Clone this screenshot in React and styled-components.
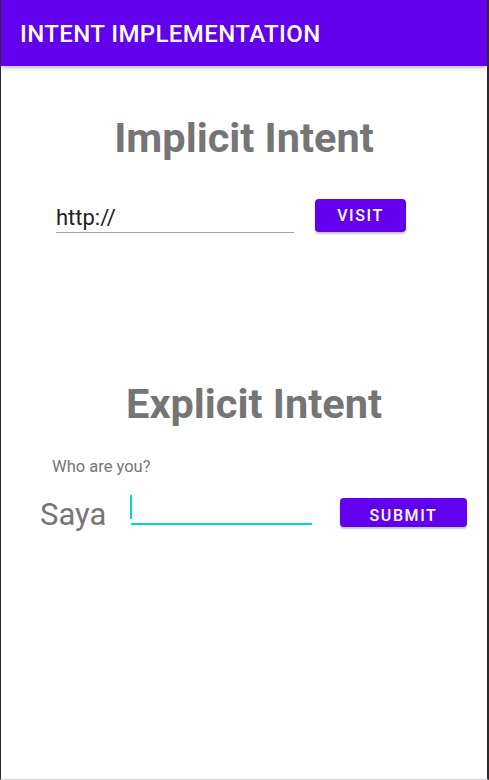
import React from "react";
import styled, { createGlobalStyle } from "styled-components";

const GlobalStyle = createGlobalStyle`
  html, body {
    margin: 0;
    padding: 0;
    background: #ffffff;
  }
  * {
    box-sizing: border-box;
  }
`;

const Screen = styled.div`
  width: 489px;
  height: 780px;
  display: flex;
  flex-direction: column;
  background: #ffffff;
  border-left: 1px solid #2b2b2f;
  border-right: 2px solid #2b2b2f;
  border-bottom: 1px solid #d2d2d2;
  font-family: Roboto, "Liberation Sans", sans-serif;
  overflow: hidden;
`;

const AppBar = styled.header`
  height: 66px;
  flex-shrink: 0;
  display: flex;
  align-items: center;
  padding: 0 19px;
  background: #6200ee;
  box-shadow: 0 2px 4px rgba(0, 0, 0, 0.25);
  position: relative;
  z-index: 1;
`;

const Title = styled.h1`
  margin: 1px 0 0;
  color: #ffffff;
  font-size: 24px;
  font-weight: 500;
  letter-spacing: 0.4px;
`;

const Heading = styled.h2`
  margin: ${(p) => p.top}px 0 0;
  padding-left: ${(p) => p.shift || 0}px;
  text-align: center;
  color: #757575;
  font-size: 41.5px;
  line-height: 49px;
  font-weight: 700;
`;

const Row = styled.div`
  display: flex;
  align-items: flex-start;
  margin-top: ${(p) => p.top}px;
  padding-left: ${(p) => p.left}px;
`;

const UrlInput = styled.input`
  width: 238px;
  height: 34px;
  margin: 0;
  padding: 4px 0 0;
  border: none;
  border-bottom: 1px solid #a0a0a0;
  outline: none;
  background: transparent;
  color: #212121;
  font-family: Roboto, "Liberation Sans", sans-serif;
  font-size: 22px;
  line-height: 26px;
`;

const Button = styled.button`
  width: ${(p) => p.w}px;
  height: ${(p) => p.h}px;
  margin: ${(p) => p.mt || 0}px 0 0 ${(p) => p.ml}px;
  padding: ${(p) => p.pt || 0}px 0 0;
  border: none;
  border-radius: 4px;
  background: #6200ee;
  color: #ffffff;
  font-family: Roboto, "Liberation Sans", sans-serif;
  font-size: 16px;
  font-weight: 500;
  letter-spacing: 1.6px;
  box-shadow: 0 2px 2px rgba(0, 0, 0, 0.22), 0 0 1px rgba(0, 0, 0, 0.12);
`;

const Label = styled.div`
  margin-top: 29px;
  padding-left: 51px;
  color: #757575;
  font-size: 16.5px;
  line-height: 19px;
`;

const Name = styled.span`
  margin-top: 2px;
  width: 91px;
  color: #757575;
  font-size: 31px;
  line-height: 35px;
`;

const NameField = styled.div`
  width: 181px;
  height: 30px;
  display: flex;
  align-items: flex-start;
  border-bottom: 2px solid #03dac5;
`;

const Caret = styled.span`
  width: 2px;
  height: 24px;
  margin-left: -1px;
  background: #03dac5;
`;

export default function App() {
  return (
    <>
      <GlobalStyle />
      <Screen>
        <AppBar>
          <Title>INTENT IMPLEMENTATION</Title>
        </AppBar>

        <Heading top={47}>Implicit Intent</Heading>
        <Row top={37} left={55}>
          <UrlInput defaultValue="http://" />
          <Button w={91} h={33} ml={21}>
            VISIT
          </Button>
        </Row>

        <Heading top={146} shift={20}>
          Explicit Intent
        </Heading>
        <Label>Who are you?</Label>
        <Row top={19} left={39}>
          <Name>Saya</Name>
          <NameField>
            <Caret />
          </NameField>
          <Button w={127} h={29} ml={28} mt={3} pt={5}>
            SUBMIT
          </Button>
        </Row>
      </Screen>
    </>
  );
}
